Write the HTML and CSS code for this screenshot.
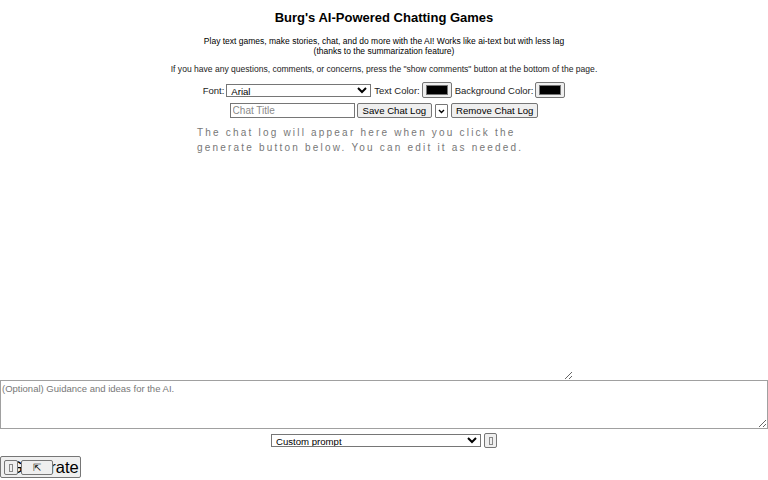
FILE: index.html
```html
<!DOCTYPE html>
<html>
<head>
<meta charset="utf-8">
<title>Burg's AI-Powered Chatting Games</title>
<link rel="stylesheet" href="styles.css">
</head>
<body>
<div class="page">
  <h1 class="title">Burg's AI-Powered Chatting Games</h1>
  <p class="intro">Play text games, make stories, chat, and do more with the AI! Works like ai-text but with less lag<br>(thanks to the summarization feature)</p>
  <p class="note">If you have any questions, comments, or concerns, press the "show comments" button at the bottom of the page.</p>
  <div class="row row-font">
    <label class="lbl">Font:</label>
    <select class="ctl sel-font"><option>Arial</option></select>
    <label class="lbl lbl-gap">Text Color:</label>
    <span class="color"><span class="swatch"></span></span>
    <label class="lbl lbl-gap">Background Color:</label>
    <span class="color"><span class="swatch"></span></span>
  </div>
  <div class="row row-log">
    <input class="ctl title-input" type="text" placeholder="Chat Title">
    <button class="ctl btn">Save Chat Log</button>
    <span class="mini-wrap">
      <select class="ctl sel-mini"></select>
      <svg class="chev" width="7" height="5" viewBox="0 0 7 5"><path d="M1 1 L3.5 3.5 L6 1" fill="none" stroke="#000" stroke-width="1.4"/></svg>
    </span>
    <button class="ctl btn btn-remove">Remove Chat Log</button>
  </div>
  <div class="log-wrap">
    <textarea class="log" placeholder="The chat log will appear here when you click the generate button below. You can edit it as needed."></textarea>
  </div>
  <textarea class="guide" placeholder="(Optional) Guidance and ideas for the AI."></textarea>
  <div class="row row-prompt">
    <select class="ctl sel-prompt"><option>Custom prompt</option></select>
    <button class="ctl btn tofu-btn"><span class="tofu"></span></button>
  </div>
  <div class="gen-row">
    <button class="gen">Generate<span class="gen-a"><span class="tofu"></span></span><span class="gen-b">⇱</span></button>
  </div>
</div>
</body>
</html>
```
FILE: styles.css
```css
html, body {
  margin: 0;
  padding: 0;
  background: #fff;
}
body {
  font-family: "Liberation Sans", Arial, sans-serif;
  color: #000;
}
.page {
  display: flex;
  flex-direction: column;
  align-items: center;
}
.title {
  font-size: 13px;
  font-weight: bold;
  margin: 10px 0 0;
  line-height: 16px;
}
.intro {
  font-size: 8.5px;
  line-height: 10px;
  margin: 10px 0 0;
  text-align: center;
}
.note {
  font-size: 8.55px;
  line-height: 10px;
  margin: 8px 0 0;
  text-align: center;
  color: #222;
}
.row {
  display: flex;
  align-items: center;
  gap: 2px;
}
.row-font {
  margin-top: 8px;
  height: 16px;
}
.row-log {
  margin-top: 5px;
  height: 15px;
}
.lbl {
  font-size: 9.5px;
  color: #222;
}
.lbl-gap { margin-left: 1px; }
.ctl {
  font-family: "Liberation Sans", Arial, sans-serif;
  font-size: 9.6px;
  box-sizing: border-box;
  margin: 0;
}
select.ctl {
  height: 13px;
  border: 1px solid #767676;
  border-radius: 0;
  background: #fff;
  padding: 0;
  line-height: 11px;
  color: #000;
}
.sel-font { width: 145px; }
.mini-wrap {
  position: relative;
  display: inline-flex;
  margin: 0 1px;
}
.sel-mini {
  width: 13px;
  -webkit-appearance: none;
  appearance: none;
  height: 14px;
}
select.sel-mini { height: 14px; border-radius: 1px; }
.chev {
  position: absolute;
  left: 3px;
  top: 5px;
  pointer-events: none;
}
.color {
  display: inline-flex;
  box-sizing: border-box;
  width: 30px;
  height: 16px;
  border: 1px solid #767676;
  border-radius: 2px;
  background: #efefef;
  padding: 2px 3px;
}
.swatch {
  flex: 1;
  background: #000;
  border: 1px solid #777;
}
.title-input {
  width: 125px;
  height: 15px;
  border: 1px solid #767676;
  padding: 0 2px;
  font-size: 10px;
}
.title-input::placeholder { color: #8a8a8a; }
.btn {
  height: 15px;
  padding: 0 5px;
  border: 1px solid #767676;
  border-radius: 2px;
  background: #efefef;
  color: #000;
  line-height: 13px;
}
.btn-remove { padding: 0 4px; }
.log-wrap {
  width: 384px;
  margin-top: 2px;
}
.log {
  display: block;
  box-sizing: border-box;
  width: 380px;
  height: 260px;
  margin-left: 1px;
  border: none;
  outline: none;
  padding: 6px 2px 2px 4px;
  font-family: "Liberation Sans", Arial, sans-serif;
  font-size: 10px;
  line-height: 14.5px;
  letter-spacing: 2.2px;
  resize: vertical;
}
.log::placeholder { color: #777; }
.guide {
  display: block;
  box-sizing: border-box;
  width: 768px;
  height: 49px;
  margin: 0;
  border: 1px solid #a0a0a0;
  padding: 2px 1px;
  font-family: "Liberation Sans", Arial, sans-serif;
  font-size: 9.5px;
}
.guide::placeholder { color: #777; }
.row-prompt {
  margin-top: 4px;
  gap: 3px;
}
.sel-prompt { width: 210px; }
.tofu-btn {
  width: 13px;
  height: 15px;
  padding: 0;
  display: inline-flex;
  align-items: center;
  justify-content: center;
}
.tofu {
  display: inline-block;
  box-sizing: border-box;
  width: 4px;
  height: 8px;
  border: 1px solid #888;
}
.gen-row {
  align-self: stretch;
  margin-top: 8px;
}
.gen {
  position: relative;
  box-sizing: border-box;
  height: 22px;
  width: 81px;
  margin: 0;
  padding: 0 0 0 9px;
  text-align: left;
  border: 1px solid #767676;
  border-radius: 2px;
  background: #efefef;
  font-family: "Liberation Sans", Arial, sans-serif;
  font-size: 16.5px;
  color: #000;
}
.gen-a {
  position: absolute;
  left: 3px;
  top: 3px;
  box-sizing: border-box;
  width: 14px;
  height: 15px;
  border: 1px solid #767676;
  border-radius: 2px;
  background: #efefef;
  display: flex;
  align-items: center;
  justify-content: center;
}
.gen-b {
  position: absolute;
  left: 20px;
  top: 3px;
  box-sizing: border-box;
  width: 32px;
  height: 15px;
  border: 1px solid #767676;
  border-radius: 2px;
  background: #efefef;
  font-size: 10px;
  line-height: 13px;
  text-align: center;
}
```
